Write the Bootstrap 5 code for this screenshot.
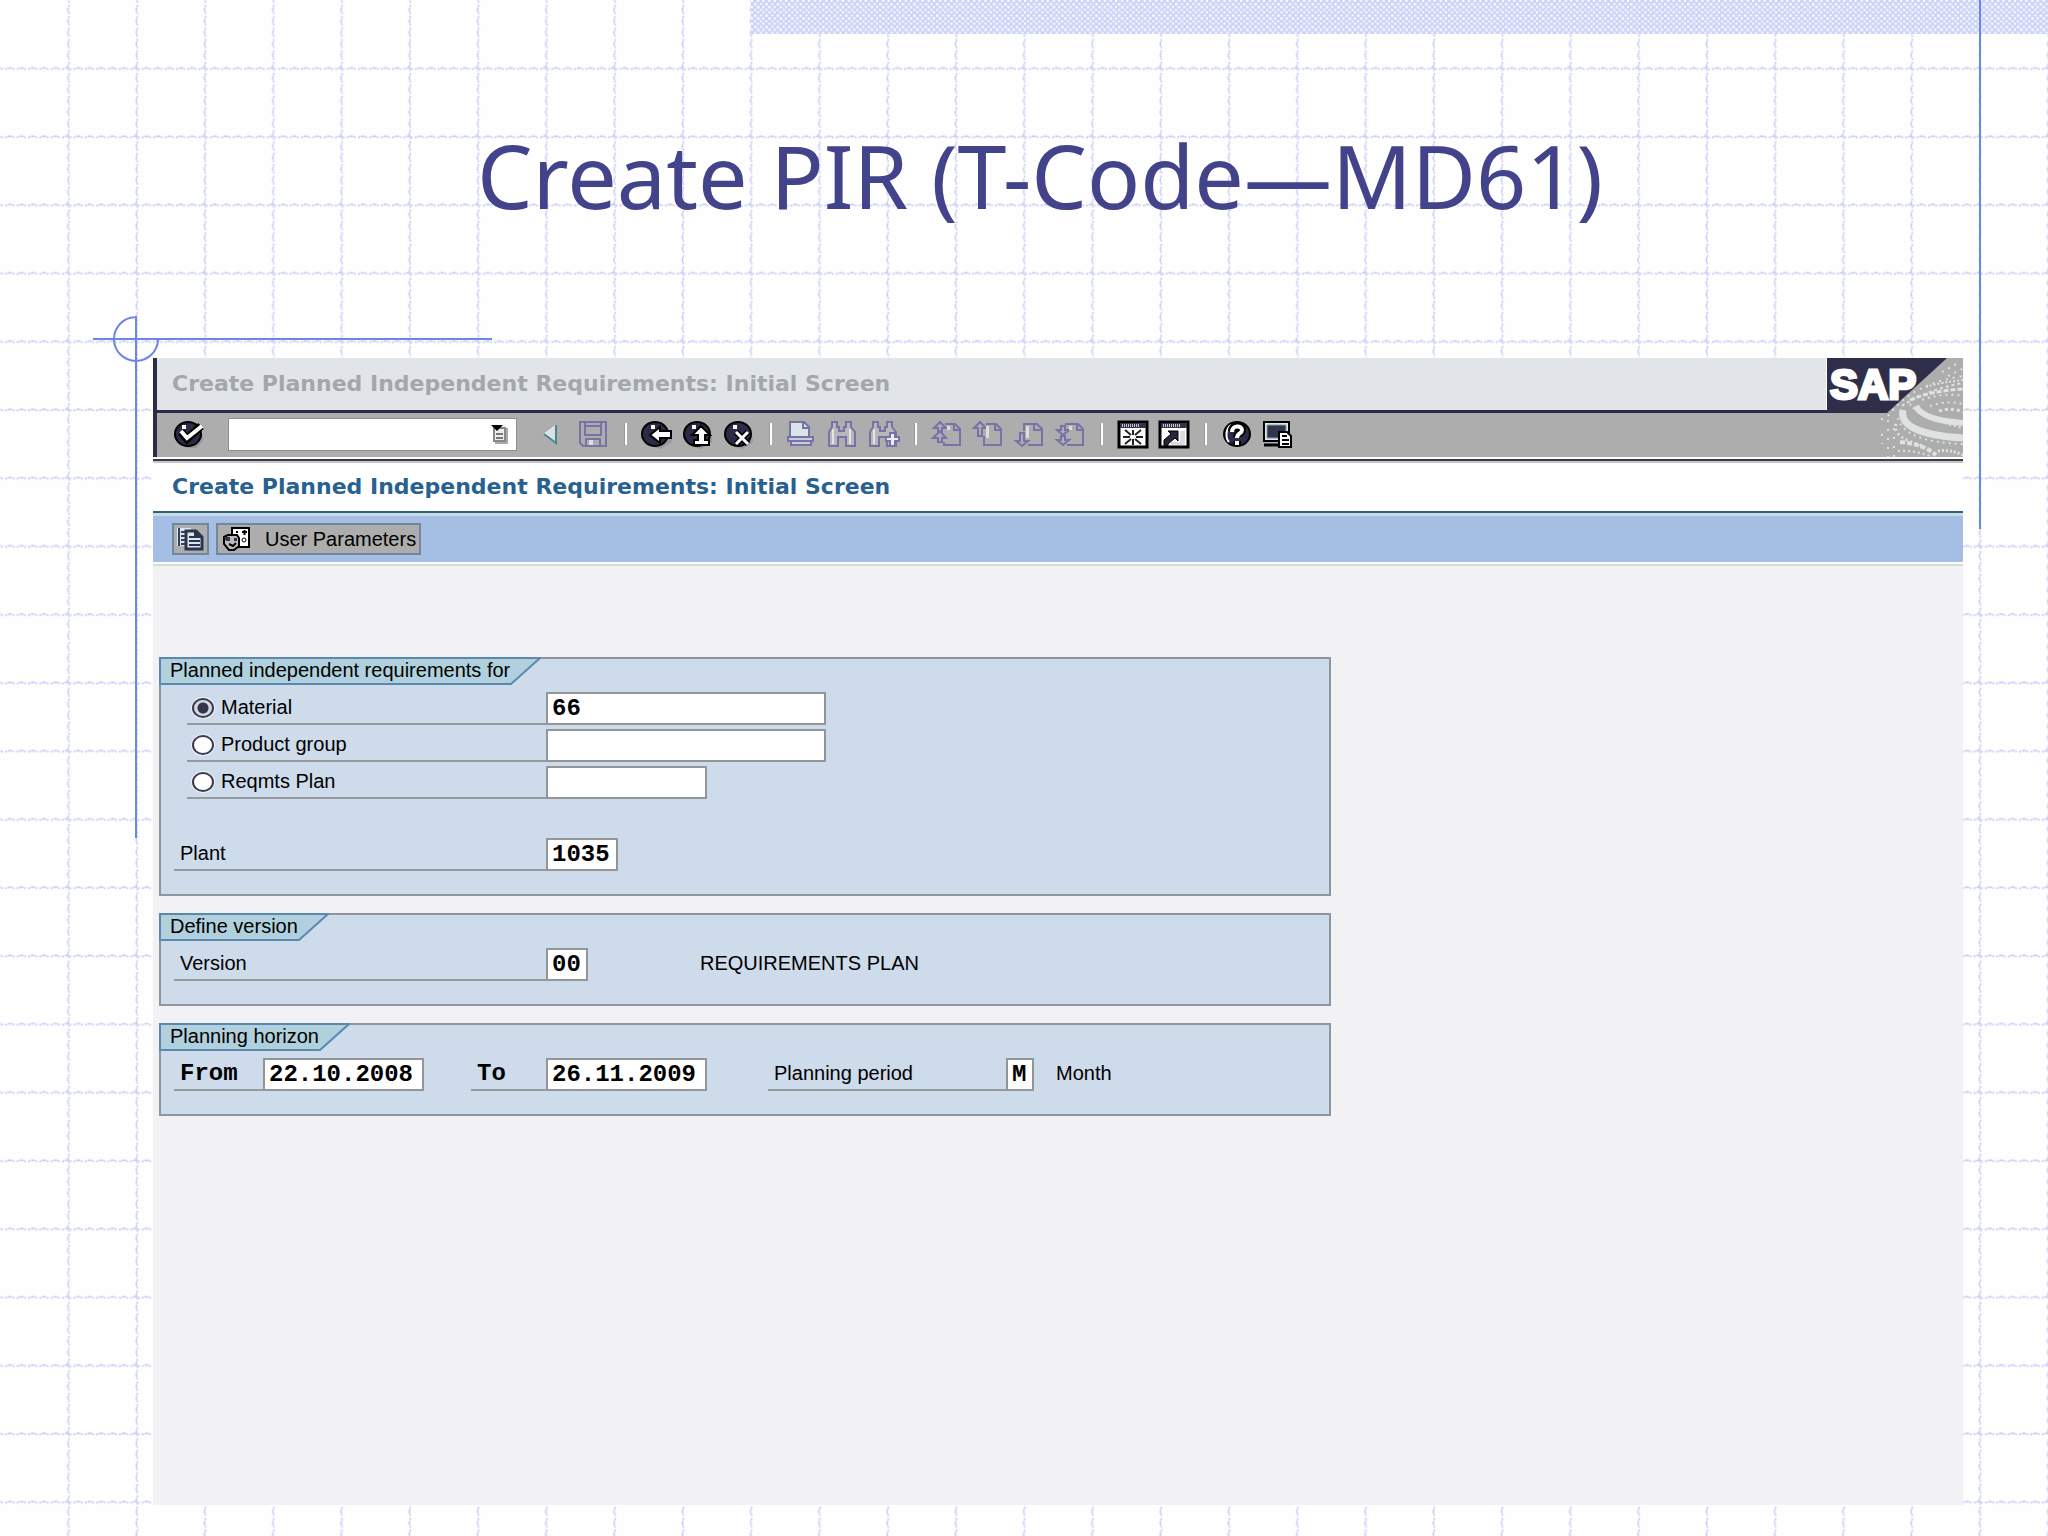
<!DOCTYPE html>
<html lang="en">
<head>
<meta charset="utf-8">
<meta name="viewport" content="width=device-width, initial-scale=1">
<title>Create PIR (T-Code—MD61)</title>
<link href="https://cdn.jsdelivr.net/npm/bootstrap@5.3.0/dist/css/bootstrap.min.css" rel="stylesheet">
<style>
  body { font-family: "Liberation Sans", Arial, sans-serif; background: #fefefe; color: #000; }
  .slide { min-height: 100vh; }
  .slide-bg { position: absolute; inset: 0; width: 100%; height: 100%; z-index: 0; }
  .slide-head { height: 358px; padding: 113px 53px 0 85px; z-index: 1; }
  .slide-title { font-family: "Noto Sans", sans-serif; font-size: 88px; line-height: 124px; color: #43438b; }
  .sap-window { z-index: 1; margin: 0 85px 31px 153px; background: #f2f1f3; }
  .sap-top { border-bottom: 2px solid #fff; }
  .sap-top-wrap { border-bottom: 2px solid #3a3a48; box-shadow: 0 2px 0 #c6c6c8; position: relative; }
  .sap-left { border-left: 4px solid #2c2c48; min-width: 0; }
  .title-strip { height: 55px; background: #e1e5e9; border-bottom: 3px solid #2c2c48; color: #a3a6aa; padding-left: 15px; }
  .screen-font { font-family: "DejaVu Sans", sans-serif; font-weight: 700; font-size: 22px; line-height: 30px; }
  .std-toolbar { height: 44px; background: #adadad; padding: 0 0 2px 11px; }
  .icon-btn { width: 41px; height: 40px; border: 0; padding: 0; background: none; display: flex; align-items: center; justify-content: center; flex: none; }
  .tool-sep { width: 22px; flex: none; display: flex; justify-content: center; }
  .tool-sep::before { content: ""; width: 3px; height: 22px; background: #fff; border-left: 1px solid #999; }
  .command-box { width: 289px; height: 33px; background: #fff; border: 1px solid #8e8e8e; margin: 0 15px 0 19px; }
  .command-box input { border: 0; background: none; outline: 0; min-width: 0; padding: 0 6px; }
  .command-box button { border: 0; background: none; padding: 0; width: 25px; text-align: left; }
  .screen-head { height: 50px; background: #fff; border-bottom: 2px solid #2d617c; color: #28608f; padding: 0 0 0 19px; margin-top: 2px; }
  .app-toolbar { height: 51px; background: #a5bfe4; border-top: 3px solid #c9dbe2; border-bottom: 2px solid #fff; padding-left: 19px; gap: 7px; }
  .app-toolbar-edge { height: 2px; background: #d5ddd8; }
  .app-btn { height: 32px; border: 2px solid #70889a; background: #adadad; padding: 0 3px 0 2px; font-size: 20px; line-height: 28px; display: flex; align-items: center; }
  .app-btn-wide { padding-left: 5px; gap: 15px; }
  .sap-content { padding: 91px 6px 0; gap: 17px; }
  .group-box { width: 100%; max-width: 1172px; background: #cddbeb; border: 2px solid #8f959d; padding-bottom: 23px; min-width: 0; }
  .group-tab { float: left; display: flex; width: auto; margin: -2px 0 7px -2px; font-size: 20px; line-height: 22px; height: 28px; }
  .group-tab span { background: #afd0dc; border: 2px solid #5c88b0; border-right: 0; padding-left: 9px; }
  .field-row { clear: both; font-size: 20px; height: 33px; margin-bottom: 4px; padding-left: 13px; }
  .field-row:last-child { margin-bottom: 0; }
  .plant-row { margin-top: 39px; }
  .cap-cell { border-bottom: 2px solid #949a9e; padding-left: 6px; line-height: 31px; flex: none; }
  .cap-wide { width: 372px; }
  .cap-radio { width: 359px; margin-left: 13px; padding-left: 5px; display: flex; align-items: center; gap: 7px; }
  .cap-from { width: 89px; } .cap-to { width: 75px; margin-left: 47px; } .cap-period { width: 238px; margin-left: 61px; }
  .mono-cap, .sap-field { font-family: "Liberation Mono", monospace; font-weight: 700; font-size: 24px; }
  .sap-field { height: 33px; border: 2px solid #929699; background: #fff; padding: 0 4px; border-radius: 0; outline: 0; flex: none; line-height: 29px; color: #000; }
  .w-long { width: 280px; } .w-date { width: 161px; } .w-plant { width: 72px; } .w-two { width: 42px; } .w-one { width: 28px; }
  .sap-radio { appearance: none; width: 22px; height: 20px; margin: 0; border: 2px solid #3a3a4c; border-radius: 50%; background: #fff; flex: none; box-shadow: 0 0 0 1px #eef2f6; }
  .sap-radio:checked { background: radial-gradient(circle, #34344a 0 5px, #d4d9e0 6px 100%); }
  .after-text { line-height: 31px; margin-left: 22px; }
  .after-far { margin-left: 112px; }
</style>
</head>
<body>
<div class="slide position-relative d-flex flex-column">
  <svg class="slide-bg" aria-hidden="true">
    <defs>
      <pattern id="gridH" x="4.3" y="34" width="11.3778" height="68.2667" patternUnits="userSpaceOnUse">
        <path d="M.8 35H3M3.6 34.5L4.8 34H6.8L8 34.5M8.4 35H10.2" fill="none" stroke="#c8ccf6" stroke-width="1.6"/>
      </pattern>
      <pattern id="gridV" x="34" y="4" width="68.2667" height="11.3778" patternUnits="userSpaceOnUse">
        <path d="M35 .8V3M34.5 3.6L34 4.8V6.8L34.5 8M35 8.4V10.2" fill="none" stroke="#c8ccf6" stroke-width="1.6"/>
      </pattern>
      <pattern id="weave" x="751" y="0" width="11.3778" height="11.3778" patternUnits="userSpaceOnUse">
        <rect width="12" height="12" fill="#ccd4f8"/>
        <path d="M0 0h2v2H0zM3 3h2.4v2.4H3zM6 0h2v2H6zM9 3h2v2H9zM0 6h2v2H0zM6 6h2.4v2.4H6zM3 9h2v2H3zM9 9h2v2H9z" fill="#fff"/>
      </pattern>
    </defs>
    <rect y="10" width="100%" height="100%" fill="url(#gridH)"/>
    <rect x="10" width="100%" height="100%" fill="url(#gridV)"/>
    <rect x="751" width="100%" height="34" fill="url(#weave)"/>
    <g fill="none" stroke="#6c86e6" stroke-width="2">
      <path d="M93 339H492M136 316V838M136 317A22 22 0 1 0 158 339"/>
      <svg x="100%" overflow="visible"><path d="M-68 0V529"/></svg>
    </g>
  </svg>

  <header class="slide-head position-relative text-center">
    <h1 class="slide-title fw-normal m-0">Create PIR (T-Code—MD61)</h1>
  </header>

  <main class="sap-window position-relative flex-grow-1">
    <div class="sap-top-wrap">
      <div class="sap-top d-flex">
        <div class="sap-left flex-grow-1">
          <div class="title-strip screen-font d-flex align-items-center">Create Planned Independent Requirements: Initial Screen</div>
          <div class="std-toolbar d-flex align-items-center" role="toolbar" aria-label="Standard toolbar">
            <button class="icon-btn" type="button" aria-label="Enter">
              <svg width="34" height="32" viewBox="0 0 34 32"><path d="M8 26L14 30H24L31 23V16Z" fill="#989898"/><ellipse cx="16" cy="16" rx="13" ry="12" fill="#2b2b48" stroke="#000" stroke-width="2"/><path d="M10 7h4v4h-4z" fill="#fff"/><path d="M9 14L15 21L29 8" fill="none" stroke="#000" stroke-width="8"/><path d="M9 13L15 20L30 8" fill="none" stroke="#fff" stroke-width="4"/></svg>
            </button>
            <div class="command-box d-flex align-items-center">
              <input class="flex-grow-1" type="text" aria-label="Command field">
              <button type="button" aria-label="Command history"><svg width="18" height="22" viewBox="0 0 18 22"><path d="M4 4h13v16H4z" fill="#aaa"/><path d="M3 4h11v13H3z" fill="#eee" stroke="#888" stroke-width="2"/><path d="M5 10h7M5 14h7" stroke="#777" stroke-width="2"/><path d="M0 1h12L6 7z" fill="#000"/></svg></button>
            </div>
            <button class="icon-btn" type="button" aria-label="Collapse">
              <svg width="34" height="32" viewBox="0 0 34 32"><path d="M20 7L8 16L20 25Z" fill="#d7e2e6" stroke="#eee"/><path d="M8 16L20 25V7" fill="none" stroke="#4c8791" stroke-width="2"/></svg>
            </button>
            <button class="icon-btn" type="button" aria-label="Save">
              <svg width="34" height="32" viewBox="0 0 34 32" fill="none" stroke="#7772a8" stroke-width="2"><path d="M3 4H29V28H6L3 25ZM8 4V17H24V4M9 28V21H23V28M8 8H24"/><path d="M12 22h4v5h-4z" fill="#ddd" stroke="none"/></svg>
            </button>
            <span class="tool-sep"></span>
            <button class="icon-btn" type="button" aria-label="Back">
              <svg width="34" height="32" viewBox="0 0 34 32"><path d="M10 28L20 31L32 24V19Z" fill="#989898"/><ellipse cx="15" cy="16" rx="13" ry="12" fill="#2b2b48" stroke="#000" stroke-width="2"/><path d="M11 7h4v4h-4z" fill="#fff"/><path d="M10 17L20 9V13H31V20H20V25Z" fill="#fff" stroke="#000" stroke-width="2"/></svg>
            </button>
            <button class="icon-btn" type="button" aria-label="Exit">
              <svg width="34" height="32" viewBox="0 0 34 32"><path d="M10 28L20 31L31 24V19Z" fill="#989898"/><ellipse cx="16" cy="16" rx="13" ry="12" fill="#2b2b48" stroke="#000" stroke-width="2"/><path d="M11 7h4v4h-4z" fill="#fff"/><path d="M20 8L29 17H24V22H28V27H13V22H17V17H11Z" fill="#fff" stroke="#000" stroke-width="2"/></svg>
            </button>
            <button class="icon-btn" type="button" aria-label="Cancel">
              <svg width="34" height="32" viewBox="0 0 34 32"><path d="M10 28L20 31L31 24V19Z" fill="#989898"/><ellipse cx="16" cy="16" rx="13" ry="12" fill="#2b2b48" stroke="#000" stroke-width="2"/><path d="M11 7h4v4h-4z" fill="#fff"/><path d="M14 14L26 26M26 14L14 26" stroke="#000" stroke-width="6"/><path d="M14 14L26 26M26 14L14 26" stroke="#fff" stroke-width="3"/></svg>
            </button>
            <span class="tool-sep"></span>
            <button class="icon-btn" type="button" aria-label="Print">
              <svg width="34" height="32" viewBox="0 0 34 32" stroke="#7772a8" stroke-width="2"><path d="M5 20V4H19L24 9V20" fill="#dbe4e6"/><path d="M18 4V10H24" fill="none"/><path d="M3 19H28V23H3ZM6 23H26V27H6Z" fill="#c9ccd4"/></svg>
            </button>
            <button class="icon-btn" type="button" aria-label="Find">
              <svg width="34" height="32" viewBox="0 0 34 32" stroke="#7772a8" stroke-width="2" fill="#b9b8b9"><path d="M6 4H11V9H13V13H18V9H20V4H25V9L29 14V28H20V19H12V28H3V14L6 9Z"/><path d="M7 11V26M24 11V26" stroke="#e4e4e4"/></svg>
            </button>
            <button class="icon-btn" type="button" aria-label="Find next">
              <svg width="34" height="32" viewBox="0 0 34 32" stroke="#7772a8" stroke-width="2" fill="#b9b8b9"><path d="M6 4H11V9H13V13H18V9H20V4H25V9L29 14V28H20V19H12V28H3V14L6 9Z"/><path d="M7 11V26" stroke="#e4e4e4"/><path d="M23 15H28V19H32V23H28V28H23V23H19V19H23Z" fill="#eceef2"/></svg>
            </button>
            <span class="tool-sep"></span>
            <button class="icon-btn" type="button" aria-label="First page">
              <svg width="34" height="32" viewBox="0 0 34 32" fill="none" stroke="#7772a8" stroke-width="2"><path d="M15 6H25L30 11V27H14V24"/><path d="M24 6V12H30M10 4L16 10H12V14H8V10H4ZM10 13L16 20H12V24H8V20H3Z"/><path d="M17 8h3v4h-3z" fill="#ddd" stroke="none"/></svg>
            </button>
            <button class="icon-btn" type="button" aria-label="Previous page">
              <svg width="34" height="32" viewBox="0 0 34 32" fill="none" stroke="#7772a8" stroke-width="2"><path d="M15 6H25L30 11V27H13V18"/><path d="M24 6V12H30M9 4L15 10H11V18H7V10H3Z"/><path d="M15 8h3v12h-3z" fill="#ddd" stroke="none"/></svg>
            </button>
            <button class="icon-btn" type="button" aria-label="Next page">
              <svg width="34" height="32" viewBox="0 0 34 32" fill="none" stroke="#7772a8" stroke-width="2"><path d="M12 13V6H25L30 11V27H16"/><path d="M22 6V12H30M8 15H12V23H16L10 28L4 23H8Z"/><path d="M14 8h3v12h-3z" fill="#ddd" stroke="none"/></svg>
            </button>
            <button class="icon-btn" type="button" aria-label="Last page">
              <svg width="34" height="32" viewBox="0 0 34 32" fill="none" stroke="#7772a8" stroke-width="2"><path d="M12 6H25L30 11V27H14"/><path d="M24 6V12H30M8 8H12V12H16L10 17L4 12H8ZM8 18H12V22H16L10 27L4 22H8Z"/><path d="M16 8h3v4h-3z" fill="#ddd" stroke="none"/></svg>
            </button>
            <span class="tool-sep"></span>
            <button class="icon-btn" type="button" aria-label="New session">
              <svg width="34" height="32" viewBox="0 0 34 32"><path d="M3 4H31V29H3Z" fill="#fff" stroke="#000" stroke-width="3"/><path d="M4 5H30V10H4Z" fill="#33334c"/><path d="M6 7.5H23" stroke="#c5c5cf" stroke-width="3" stroke-dasharray="1 1"/><path d="M17 12V17M17 21V27M7 19H14M20 19H27M9 12L15 17M25 12L19 17M9 26L15 21M25 26L19 21" stroke="#222" stroke-width="2"/></svg>
            </button>
            <button class="icon-btn" type="button" aria-label="Create shortcut">
              <svg width="34" height="32" viewBox="0 0 34 32"><path d="M3 4H31V29H3Z" fill="#fff" stroke="#000" stroke-width="3"/><path d="M4 5H30V10H4Z" fill="#33334c"/><path d="M6 7.5H23" stroke="#c5c5cf" stroke-width="3" stroke-dasharray="1 1"/><path d="M23 13H28V27H14V24H23Z" fill="#dcdcdc"/><path d="M11 13H21V23L18 20L11 26V28H7V22L14 16Z" fill="#26263c" stroke="#000"/></svg>
            </button>
            <span class="tool-sep"></span>
            <button class="icon-btn" type="button" aria-label="Help">
              <svg width="34" height="32" viewBox="0 0 34 32"><ellipse cx="17" cy="16" rx="13" ry="12" fill="#2b2b48" stroke="#000" stroke-width="2"/><path d="M11 7C6 10 5 20 9 24" fill="none" stroke="#fff" stroke-width="2"/><path d="M12 13C12 7 22 7 22 12C22 16 17 15 17 19M17 23V27" fill="none" stroke="#000" stroke-width="8"/><path d="M12 14C12 7 22 7 22 12C22 16 17 15 17 20M17 23V27" fill="none" stroke="#fff" stroke-width="4"/></svg>
            </button>
            <button class="icon-btn" type="button" aria-label="Customize local layout">
              <svg width="34" height="32" viewBox="0 0 34 32"><path d="M3 4H28V23H3Z" fill="#dfe9ec" stroke="#000" stroke-width="2"/><path d="M6 7H25V20H6Z" fill="#33334c" stroke="#78a2a8"/><path d="M3 27H17" stroke="#000" stroke-width="3"/><path d="M18 14H26L30 18V29H18Z" fill="#fff" stroke="#000" stroke-width="2"/><path d="M21 18H26M21 22H28M21 26H28" stroke="#000" stroke-width="2"/></svg>
            </button>
          </div>
        </div>
        <svg class="flex-shrink-0" width="137" height="99" viewBox="0 0 137 99" role="img" aria-label="SAP">
          <rect width="137" height="99" fill="#adadad"/>
          <g fill="none" stroke="#dfe2e2">
            <path d="M62 58Q85 26 137 18" stroke-width="2" stroke-dasharray="2 5"/>
            <path d="M76 48Q100 32 137 25" stroke-width="2" stroke-dasharray="3 3"/>
            <path d="M84 42Q104 33 137 31" stroke-width="3" stroke-dasharray="5 2"/>
            <path d="M100 29Q116 24 137 22" stroke-width="2" stroke-dasharray="2 2"/>
            <path d="M96 42Q118 34 137 38" stroke-width="2" stroke-dasharray="2 4"/>
            <path d="M104 48Q122 42 137 46" stroke-width="2" stroke-dasharray="2 4"/>
            <path d="M113 53Q126 49 137 54" stroke-width="3" stroke-dasharray="3 3"/>
            <path d="M90 48Q96 62 137 65" stroke-width="6"/>
            <path d="M84 46Q92 60 137 70" stroke-width="2" stroke-dasharray="2 3"/>
            <path d="M77 52Q72 76 137 80" stroke-width="7"/>
            <path d="M72 60Q78 84 137 86" stroke-width="2" stroke-dasharray="2 4"/>
            <path d="M70 66Q66 80 98 88" stroke-width="3" stroke-dasharray="2 3"/>
            <path d="M62 62V99M68 70V99M56 60V66M56 76V86" stroke-width="2" stroke-dasharray="2 7"/>
            <path d="M74 84Q98 86 110 97" stroke-width="4" stroke-dasharray="5 2"/>
            <path d="M72 93Q88 92 104 98" stroke-width="2" stroke-dasharray="2 3"/>
            <path d="M112 93Q124 91 137 97" stroke-width="3" stroke-dasharray="2 2"/>
            <path d="M116 14L134 4M122 18L136 11" stroke-width="2" stroke-dasharray="2 5"/>
          </g>
          <path d="M0 0H121L61 55H0Z" fill="#2e2e4a"/>
          <path d="M0 0V52" stroke="#fff" stroke-width="2"/>
          <text x="4" y="41" font-family="Liberation Sans, sans-serif" font-size="42" font-weight="700" fill="#fff" stroke="#fff" stroke-width="3">SAP</text>
        </svg>
      </div>
    </div>

    <h2 class="screen-head screen-font d-flex align-items-center mb-0">Create Planned Independent Requirements: Initial Screen</h2>

    <div class="app-toolbar d-flex align-items-center" role="toolbar" aria-label="Application toolbar">
      <button class="app-btn" type="button" aria-label="Copy from">
        <svg width="28" height="24" viewBox="0 0 28 24"><path d="M1 1H15V19H1Z" fill="#dce6ea"/><path d="M3 1V19M5 5H12M5 9H10M5 13H10M5 17H9" stroke="#33415a" stroke-width="2"/><path d="M10 4H20L26 10V22H10Z" fill="#dce6ea" stroke="#2d3450" stroke-width="3"/><path d="M18 3V11H27Z" fill="#2d3450"/><path d="M13 10H18M13 14H24M13 18H24" stroke="#2d3450" stroke-width="2"/></svg>
      </button>
      <button class="app-btn app-btn-wide" type="button">
        <svg width="27" height="26" viewBox="0 0 27 26"><path d="M9 2H26V21H9Z" fill="#fff" stroke="#000" stroke-width="2"/><path d="M14 5V7M19 6H24M21.500 4V9" stroke="#000" stroke-width="2"/><circle cx="21" cy="14" r="2" fill="none" stroke="#000"/><path d="M1 11L5 9H14L16 12V20L11 24H6L1 18Z" fill="#bbb" stroke="#000" stroke-width="2"/><path d="M1 11H7V15H3ZM11 12H14V15H11Z" fill="#33334c"/><path d="M6 18L10 20L13 17" fill="none" stroke="#000" stroke-width="2"/></svg>
        <span>User Parameters</span>
      </button>
    </div>
    <div class="app-toolbar-edge"></div>

    <form class="sap-content d-flex flex-column" onsubmit="return false">
      <fieldset class="group-box">
        <legend class="group-tab"><span>Planned independent requirements for</span><svg width="31" height="28"><path d="M0 0H31L1 28H0Z" fill="#afd0dc"/><path d="M0 1H30L1 27H0" fill="none" stroke="#5c88b0" stroke-width="2"/></svg></legend>
        <div class="field-row d-flex">
          <div class="cap-cell cap-radio"><input class="sap-radio" type="radio" name="kind" id="kMat" checked><label for="kMat">Material</label></div>
          <input class="sap-field w-long" type="text" value="66" aria-label="Material">
        </div>
        <div class="field-row d-flex">
          <div class="cap-cell cap-radio"><input class="sap-radio" type="radio" name="kind" id="kGroup"><label for="kGroup">Product group</label></div>
          <input class="sap-field w-long" type="text" aria-label="Product group">
        </div>
        <div class="field-row d-flex">
          <div class="cap-cell cap-radio"><input class="sap-radio" type="radio" name="kind" id="kPlan"><label for="kPlan">Reqmts Plan</label></div>
          <input class="sap-field w-date" type="text" aria-label="Reqmts Plan">
        </div>
        <div class="field-row plant-row d-flex">
          <label class="cap-cell cap-wide" for="plant">Plant</label>
          <input class="sap-field w-plant" type="text" id="plant" value="1035">
        </div>
      </fieldset>

      <fieldset class="group-box">
        <legend class="group-tab"><span>Define version</span><svg width="31" height="28"><path d="M0 0H31L1 28H0Z" fill="#afd0dc"/><path d="M0 1H30L1 27H0" fill="none" stroke="#5c88b0" stroke-width="2"/></svg></legend>
        <div class="field-row d-flex">
          <label class="cap-cell cap-wide" for="version">Version</label>
          <input class="sap-field w-two" type="text" id="version" value="00">
          <span class="after-text after-far">REQUIREMENTS PLAN</span>
        </div>
      </fieldset>

      <fieldset class="group-box">
        <legend class="group-tab"><span>Planning horizon</span><svg width="31" height="28"><path d="M0 0H31L1 28H0Z" fill="#afd0dc"/><path d="M0 1H30L1 27H0" fill="none" stroke="#5c88b0" stroke-width="2"/></svg></legend>
        <div class="field-row d-flex">
          <label class="cap-cell mono-cap cap-from" for="from">From</label>
          <input class="sap-field w-date" type="text" id="from" value="22.10.2008">
          <label class="cap-cell mono-cap cap-to" for="to">To</label>
          <input class="sap-field w-date" type="text" id="to" value="26.11.2009">
          <label class="cap-cell cap-period" for="period">Planning period</label>
          <input class="sap-field w-one" type="text" id="period" value="M">
          <span class="after-text">Month</span>
        </div>
      </fieldset>
    </form>
  </main>
</div>
<script src="https://cdn.jsdelivr.net/npm/bootstrap@5.3.0/dist/js/bootstrap.bundle.min.js"></script>
</body>
</html>
